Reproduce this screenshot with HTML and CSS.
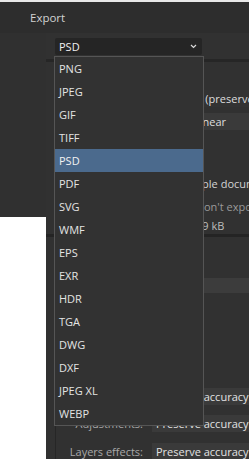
FILE: index.html
```html
<!DOCTYPE html>
<html lang="en">

<head>
    <meta charset="UTF-8">
    <meta name="viewport" content="width=device-width, initial-scale=1.0">
    <title>Export</title>
    <link rel="stylesheet" href="styles.css">
</head>

<body>
    <div class="topline"></div>
    <div class="titlebar">Export</div>

    <div class="dialog-body">
        <aside class="side">
            <div class="side-dark"></div>
            <div class="side-page"></div>
        </aside>

        <main class="panel">
            <div class="format">
                <div class="select">
                    <span>PSD</span>
                    <svg class="chevron" width="7" height="5" viewBox="0 0 7 5">
                        <path d="M1 1 L3.5 3.5 L6 1" fill="none" stroke="#d8d8d8" stroke-width="1.2" />
                    </svg>
                </div>
                <ul class="menu">
                    <li>PNG</li>
                    <li>JPEG</li>
                    <li>GIF</li>
                    <li>TIFF</li>
                    <li class="selected">PSD</li>
                    <li>PDF</li>
                    <li>SVG</li>
                    <li>WMF</li>
                    <li>EPS</li>
                    <li>EXR</li>
                    <li>HDR</li>
                    <li>TGA</li>
                    <li>DWG</li>
                    <li>DXF</li>
                    <li>JPEG XL</li>
                    <li>WEBP</li>
                </ul>
            </div>

            <div class="rule"></div>

            <div class="field row-preset">y (preserve accuracy)</div>
            <div class="field row-space">Linear</div>

            <div class="plain row-area">Multiple documents</div>
            <div class="plain dim row-hidden">Don't export</div>
            <div class="plain row-size">29 kB</div>

            <div class="band"></div>

            <div class="group">
                <div class="field row-light"></div>
                <div class="prop row-raster">
                    <span class="label">Rasterize:</span>
                    <span class="field">Preserve accuracy</span>
                </div>
                <div class="prop row-adjust">
                    <span class="label">Adjustments:</span>
                    <span class="field">Preserve accuracy</span>
                </div>
                <div class="prop row-effects">
                    <span class="label">Layers effects:</span>
                    <span class="field">Preserve accuracy</span>
                </div>
            </div>
        </main>
    </div>
</body>

</html>
```

FILE: styles.css
```css
* {
    margin: 0;
    padding: 0;
    box-sizing: border-box;
}

body {
    width: 249px;
    height: 459px;
    overflow: hidden;
    background-color: #313131;
    font-family: 'Open Sans', 'Noto Sans', sans-serif;
    font-size: 11px;
    color: #dedede;
}

.topline {
    height: 2px;
    background-color: #e8e8e8;
}

.titlebar {
    height: 31px;
    padding-left: 30px;
    line-height: 32px;
    font-size: 11.5px;
    color: #d2d2d2;
    background-color: #2d2d2d;
}

.dialog-body {
    display: grid;
    grid-template-columns: 46px 1fr;
    height: 426px;
}

.side {
    display: flex;
    flex-direction: column;
}

.side-dark {
    height: 184px;
    background-color: #303030;
}

.side-page {
    flex: 1;
    background-color: #ffffff;
}

.panel {
    padding-top: 5px;
    background-color: #313131;
    overflow: hidden;
}

/* format picker and its open list */
.format {
    position: relative;
    margin-left: 9px;
    width: 147px;
}

.select {
    display: flex;
    align-items: center;
    justify-content: space-between;
    height: 17px;
    padding: 0 4px;
    background-color: #252525;
    border-radius: 2px;
    color: #f0f0f0;
}

.chevron {
    margin-right: 1px;
}

.menu {
    position: absolute;
    top: 18px;
    left: -1px;
    width: 150px;
    list-style: none;
    background-color: #323232;
    border: 1px solid #555555;
    z-index: 2;
}

.menu li {
    height: 23px;
    line-height: 23px;
    padding-left: 4px;
    color: #e4e4e4;
}

.menu li.selected {
    background-color: #4b6a8d;
    color: #f2f2f2;
}

/* dialog content behind the list */
.rule {
    height: 3px;
    margin-top: 4px;
    background-color: #262626;
}

.field {
    display: block;
    height: 17px;
    line-height: 17px;
    padding-left: 4px;
    background-color: #393939;
    white-space: nowrap;
    overflow: hidden;
}

.plain {
    height: 17px;
    line-height: 17px;
    white-space: nowrap;
    overflow: hidden;
    color: #d4d4d4;
}

.dim {
    color: #9a9a9a;
}

.row-preset {
    margin-top: 28px;
    margin-left: 147px;
    background-color: #333333;
}

.row-space {
    margin-top: 6px;
    margin-left: 144px;
    background-color: #3a3a3a;
}

.row-area {
    margin-top: 45px;
    padding-left: 130px;
}

.row-hidden {
    margin-top: 6px;
    padding-left: 150px;
}

.row-size {
    margin-top: 2px;
    padding-left: 150px;
    color: #bdbdbd;
}

.band {
    height: 3px;
    background-color: #242424;
}

.group {
    margin-left: 9px;
    height: 222px;
    border-left: 1px solid #262626;
    padding-top: 41px;
}

.row-light {
    height: 15px;
    background-color: #3c3c3c;
}

.prop {
    display: flex;
    align-items: center;
    height: 17px;
}

.prop .label {
    flex: none;
    width: 96px;
    padding-right: 9px;
    text-align: right;
    color: #a8a8a8;
    white-space: nowrap;
}

.prop .field {
    flex: 1;
    height: 17px;
    padding-left: 4px;
    background-color: #3a3a3a;
    color: #e2e2e2;
}

.row-raster {
    margin-top: 95px;
}

.row-adjust {
    margin-top: 10px;
}

.row-effects {
    margin-top: 11px;
}
```
